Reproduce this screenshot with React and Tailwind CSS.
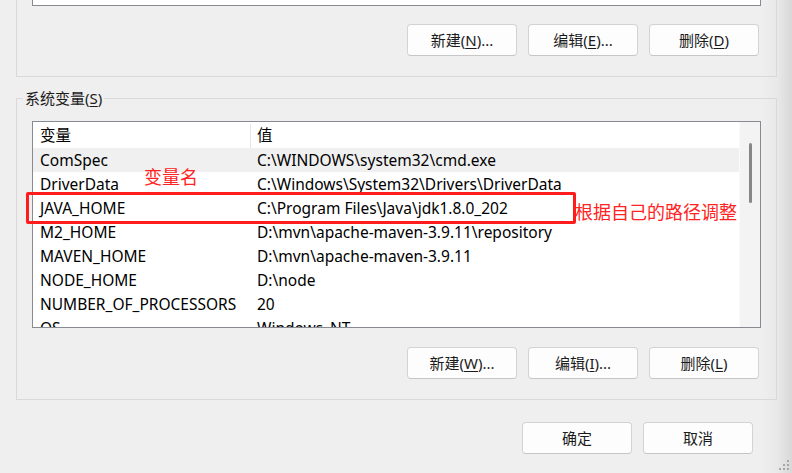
export default function App() {
  const rows = [
    ["ComSpec", "C:\\WINDOWS\\system32\\cmd.exe"],
    ["DriverData", "C:\\Windows\\System32\\Drivers\\DriverData"],
    ["JAVA_HOME", "C:\\Program Files\\Java\\jdk1.8.0_202"],
    ["M2_HOME", "D:\\mvn\\apache-maven-3.9.11\\repository"],
    ["MAVEN_HOME", "D:\\mvn\\apache-maven-3.9.11"],
    ["NODE_HOME", "D:\\node"],
    ["NUMBER_OF_PROCESSORS", "20"],
    ["OS", "Windows_NT"],
  ];

  const Btn = ({ children }) => (
    <div className="h-[32px] w-[110px] shrink-0 rounded-[4px] border border-[#d3d3d3] border-b-[#c6c6c6] bg-[#fdfdfd] flex items-center justify-center text-[15px] text-[#1b1b1b] leading-none">
      {children}
    </div>
  );

  return (
    <div className="relative w-[792px] h-[473px] overflow-hidden bg-[linear-gradient(to_right,#efefef_0px,#efefef_760px,#e9e9e9_777px,#d8d8d8_792px)] font-['Noto_Sans','Noto_Sans_CJK_SC',sans-serif] text-[15px] text-black">
      {/* top group box (user variables, cut off) */}
      <div className="ml-[16px] w-[761px] h-[77px] border-x border-b border-[#d9d9d9] flex flex-col">
        <div className="ml-[15px] w-[729px] h-[6px] border-x border-b border-[#878a90] bg-white" />
        <div className="mt-[18px] pl-[390px] flex gap-[11px]">
          <Btn>新建(<span className="underline underline-offset-2">N</span>)...</Btn>
          <Btn>编辑(<span className="underline underline-offset-2">E</span>)...</Btn>
          <Btn>删除(<span className="underline underline-offset-2">D</span>)</Btn>
        </div>
      </div>

      {/* system variables group */}
      <div className="relative mt-[21px] ml-[16px] w-[761px] h-[302px] border border-[#d9d9d9]">
        <div className="absolute -top-[11px] left-[6px] px-[2px] bg-[#efefef] text-[15px] leading-[20px] text-[#1b1b1b]">
          系统变量(<span className="underline underline-offset-2">S</span>)
        </div>
        <div className="pt-[22px] pl-[15px]">
          <div className="w-[729px] h-[207px] border border-[#878a90] bg-white flex overflow-hidden text-[15.5px]">
            <div className="flex-1 flex flex-col overflow-hidden">
              <div className="h-[26px] shrink-0 flex items-center pt-[2px]">
                <div className="w-[218px] h-full pl-[7px] flex items-center border-r border-[#e5e5e5]">变量</div>
                <div className="pl-[6px]">值</div>
              </div>
              {rows.map(([k, v], i) => (
                <div
                  key={k}
                  className={`h-[24px] shrink-0 flex items-center pt-[2px] whitespace-nowrap ${i === 0 ? "bg-[#f0f0f0]" : ""}`}
                >
                  <div className="w-[218px] pl-[7px]">{k}</div>
                  <div className="pl-[6px]">{v}</div>
                </div>
              ))}
            </div>
            <div className="w-[21px] shrink-0 bg-[#f3f3f3] border-l border-[#fafafa] flex justify-center">
              <div className="mt-[21px] w-[3px] h-[60px] rounded-full bg-[#878787]" />
            </div>
          </div>
          <div className="mt-[19px] pl-[375px] flex gap-[11px]">
            <Btn>新建(<span className="underline underline-offset-2">W</span>)...</Btn>
            <Btn>编辑(<span className="underline underline-offset-2">I</span>)...</Btn>
            <Btn>删除(<span className="underline underline-offset-2">L</span>)</Btn>
          </div>
        </div>
      </div>

      {/* OK / Cancel */}
      <div className="mt-[22px] pl-[522px] flex gap-[11px]">
        <Btn>确定</Btn>
        <Btn>取消</Btn>
      </div>

      {/* annotations */}
      <div className="absolute left-[26px] top-[192px] w-[550px] h-[32px] border-[3px] border-[#ff1c1c] rounded-[2px]" />
      <div className="absolute left-[144px] top-[165px] text-[18px] leading-[24px] text-[#ff2323]">变量名</div>
      <div className="absolute left-[575px] top-[200px] text-[18px] leading-[24px] text-[#ff2323]">根据自己的路径调整</div>

      {/* resize grip */}
      <svg className="absolute right-[2px] bottom-[2px]" width="12" height="12" viewBox="0 0 12 12">
        <rect x="9" y="1" width="2" height="2" fill="#a6a6a6" />
        <rect x="5" y="5" width="2" height="2" fill="#a6a6a6" />
        <rect x="9" y="5" width="2" height="2" fill="#a6a6a6" />
        <rect x="1" y="9" width="2" height="2" fill="#a6a6a6" />
        <rect x="5" y="9" width="2" height="2" fill="#a6a6a6" />
        <rect x="9" y="9" width="2" height="2" fill="#a6a6a6" />
      </svg>
    </div>
  );
}
